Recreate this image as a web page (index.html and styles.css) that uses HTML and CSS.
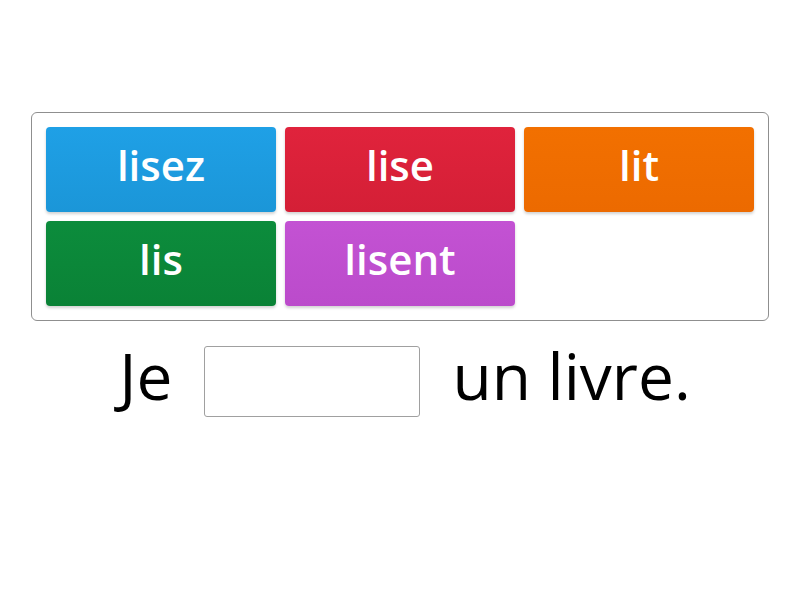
FILE: index.html
```html
<!DOCTYPE html>
<html>
<head>
<meta charset="utf-8">
<link rel="stylesheet" href="styles.css">
</head>
<body>
<div class="page">
  <div class="bank">
    <div class="tile blue">lisez</div>
    <div class="tile red">lise</div>
    <div class="tile orange">lit</div>
    <div class="tile green">lis</div>
    <div class="tile purple">lisent</div>
  </div>
  <div class="sentence">
    <span class="word">Je</span>
    <span class="blank"></span>
    <span class="word">un livre.</span>
  </div>
</div>
</body>
</html>
```
FILE: styles.css
```css
html, body {
  margin: 0;
  padding: 0;
  background: #ffffff;
}
.page {
  width: 800px;
  height: 600px;
  padding-top: 112px;
  box-sizing: border-box;
  font-family: "Open Sans", sans-serif;
}
.bank {
  margin-left: 31px;
  width: 738px;
  box-sizing: border-box;
  border: 1px solid #8f8f8f;
  border-radius: 6px;
  padding: 14px;
  display: grid;
  grid-template-columns: repeat(3, 230px);
  grid-auto-rows: 85px;
  gap: 9px;
}
.tile {
  border-radius: 4px;
  color: #ffffff;
  font-weight: 600;
  font-size: 42px;
  display: flex;
  align-items: center;
  justify-content: center;
  box-shadow: 0 2px 3px rgba(0,0,0,0.18);
  padding-bottom: 10px;
  box-sizing: border-box;
}
.blue { background: linear-gradient(#1fa0e6, #1b96d8); }
.red { background: linear-gradient(#e0233c, #d41f36); }
.orange { background: linear-gradient(#f27000, #ec6a00); }
.green { background: linear-gradient(#0c8c3c, #0a8236); }
.purple { background: linear-gradient(#c352d3, #bb4bcb); }
.sentence {
  margin-top: 23px;
  display: flex;
  align-items: center;
  justify-content: center;
  gap: 32px;
  font-size: 64px;
  color: #000000;
  padding-left: 10px;
}
.word {
  line-height: 1;
  padding-bottom: 10px;
}
.blank {
  width: 216px;
  height: 71px;
  box-sizing: border-box;
  border: 1px solid #a0a0a0;
  border-radius: 3px;
  background: #ffffff;
}
```
